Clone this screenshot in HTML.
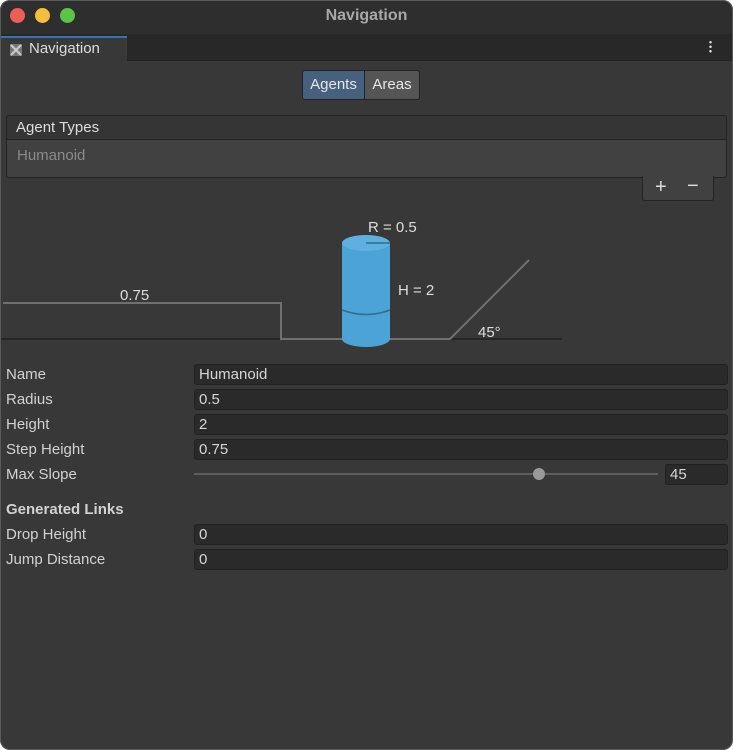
<!DOCTYPE html>
<html><head><style>
*{margin:0;padding:0;box-sizing:border-box}
body{width:733px;height:750px;background:#fff;font-family:"Liberation Sans",sans-serif;overflow:hidden}
.win{position:absolute;left:0;top:0;width:733px;height:750px;background:#383838;border-radius:10px;overflow:hidden}
.edge{position:absolute;left:0;top:0;width:733px;height:750px;border-radius:10px;box-shadow:inset 0 0 0 1px #5a5a5a;pointer-events:none}
.title{position:absolute;left:0;top:0;width:733px;height:34px;background:#2e2e2e;color:#a8a8a8;font-weight:bold;font-size:16px;text-align:center;line-height:32px}
.dot{position:absolute;top:8px;width:15px;height:15px;border-radius:50%}
.tabs{position:absolute;left:0;top:34px;width:733px;height:27px;background:#282828;border-bottom:1px solid #232323}
.tab{position:absolute;left:1px;top:2px;width:126px;height:25px;background:#383838;border-top:2px solid #3a72b0;color:#ddd;font-size:15px;line-height:22px;padding-left:28px}
.abs{position:absolute}
.lbl{position:absolute;left:6px;color:#d2d2d2;font-size:15px}
.fld{position:absolute;left:194px;width:534px;height:21px;background:#2a2a2a;border:1px solid #212121;border-radius:3px;color:#d6d6d6;font-size:15px;line-height:19px;padding-left:4px}
</style></head><body>
<div class="win">
<div class="title">Navigation</div>
<div class="dot" style="left:10px;background:#ec5f57"></div>
<div class="dot" style="left:35px;background:#f4be3e"></div>
<div class="dot" style="left:60px;background:#5cc447"></div>
<div class="tabs">
<div class="tab"><svg class="abs" style="left:8px;top:5px" width="14" height="14" viewBox="0 0 14 14"><rect x="1" y="1" width="12" height="12" fill="#777"/><path d="M2 2L12 12M12 2L2 12" stroke="#ccc" stroke-width="2"/></svg>Navigation</div>
<div class="abs" style="left:709px;top:6px;width:3px;height:13px;background:radial-gradient(circle,#ddd 1px,transparent 1.5px) 0 0/3px 4.5px"></div>
</div>
<div class="abs" style="left:302px;top:70px;width:118px;height:30px;border:1px solid #222;border-radius:3px;background:#555;overflow:hidden">
<div class="abs" style="left:0;top:0;width:62px;height:28px;background:#46607e;border-right:1px solid #222;color:#e6e6e6;font-size:15px;line-height:28px;text-align:center">Agents</div>
<div class="abs" style="left:62px;top:0;width:54px;height:28px;color:#e6e6e6;font-size:15px;line-height:28px;text-align:center">Areas</div>
</div>
<div class="abs" style="left:6px;top:115px;width:721px;height:63px;border:1px solid #232323;border-radius:3px;background:#414141;overflow:hidden">
<div class="abs" style="left:0;top:0;width:721px;height:24px;background:#353535;border-bottom:1px solid #232323;color:#ddd;font-size:15px;line-height:23px;padding-left:9px">Agent Types</div>
<div class="abs" style="left:10px;top:31px;color:#8a8a8a;font-size:15px">Humanoid</div>
</div>
<div class="abs" style="left:642px;top:176px;width:72px;height:25px;background:#414141;border:1px solid #232323;border-top:none;border-radius:0 0 3px 3px;color:#ddd;font-size:20px;line-height:22px"><span class="abs" style="left:12px;top:0">+</span><span class="abs" style="left:44px;top:-1px">−</span></div>
<svg class="abs" style="left:0;top:215px" width="733" height="140">
<line x1="0" y1="124" x2="562" y2="124" stroke="#262626" stroke-width="2"/>
<polyline points="3,88 281,88 281,124 450,124 529,45" fill="none" stroke="#707070" stroke-width="2"/>
<rect x="342" y="28" width="48" height="96" fill="#4ba3d6"/>
<ellipse cx="366" cy="124" rx="24" ry="8" fill="#4ba3d6"/>
<ellipse cx="366" cy="28" rx="24" ry="8" fill="#5fb0de"/>
<path d="M342 95 Q366 104 390 95" fill="none" stroke="#2d6d94" stroke-width="1.5"/>
<line x1="366" y1="28" x2="390" y2="28" stroke="#2d6d94" stroke-width="1.5"/>
<text x="120" y="85" fill="#ddd" font-size="15" font-family="Liberation Sans">0.75</text>
<text x="368" y="17" fill="#ddd" font-size="15" font-family="Liberation Sans">R = 0.5</text>
<text x="398" y="80" fill="#ddd" font-size="15" font-family="Liberation Sans">H = 2</text>
<text x="478" y="122" fill="#ddd" font-size="15" font-family="Liberation Sans">45°</text>
</svg>
<div class="lbl" style="top:366px">Name</div><div class="fld" style="top:364px">Humanoid</div>
<div class="lbl" style="top:391px">Radius</div><div class="fld" style="top:389px">0.5</div>
<div class="lbl" style="top:416px">Height</div><div class="fld" style="top:414px">2</div>
<div class="lbl" style="top:441px">Step Height</div><div class="fld" style="top:439px">0.75</div>
<div class="lbl" style="top:466px">Max Slope</div>
<div class="abs" style="left:194px;top:473px;width:464px;height:2px;background:#5e5e5e"></div>
<div class="abs" style="left:533px;top:468px;width:12px;height:12px;border-radius:50%;background:#999"></div>
<div class="fld" style="top:464px;left:665px;width:63px">45</div>
<div class="lbl" style="top:501px;font-weight:bold">Generated Links</div>
<div class="lbl" style="top:526px">Drop Height</div><div class="fld" style="top:524px">0</div>
<div class="lbl" style="top:551px">Jump Distance</div><div class="fld" style="top:549px">0</div>
<div class="edge"></div>
</div>
</body></html>
